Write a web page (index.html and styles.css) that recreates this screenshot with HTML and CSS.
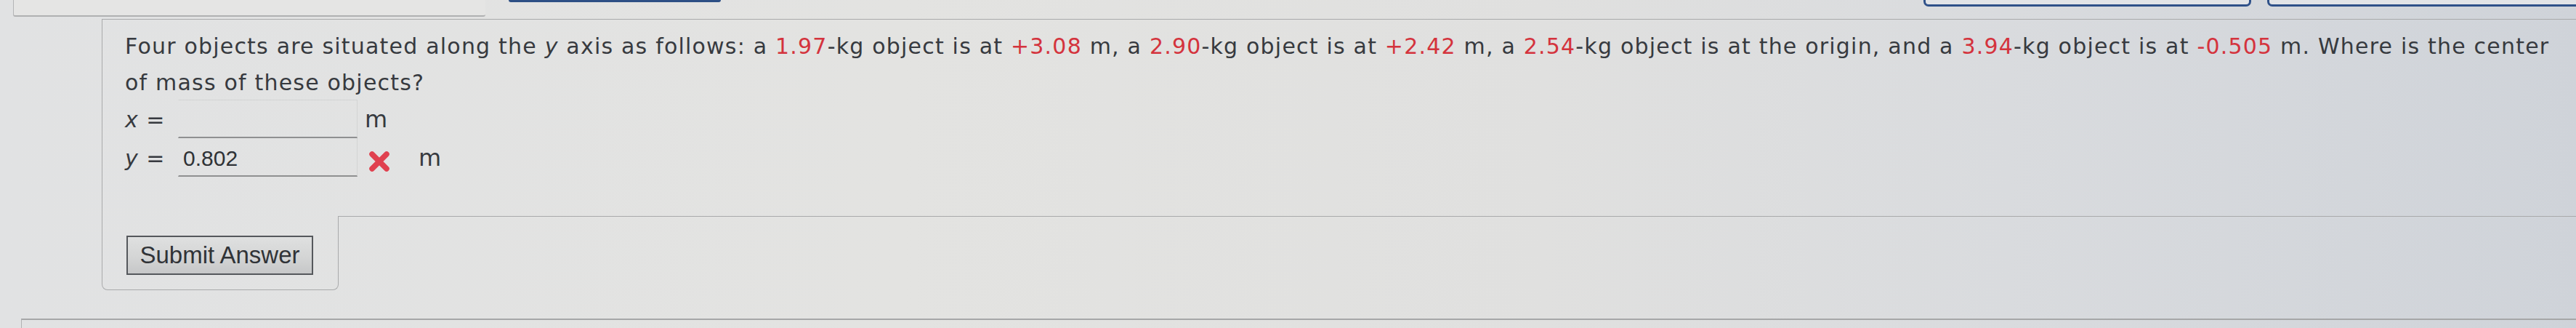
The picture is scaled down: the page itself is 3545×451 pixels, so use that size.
FILE: index.html
```html
<!DOCTYPE html>
<html lang="en">
<head>
<meta charset="utf-8">
<title>Center of mass question</title>
<link rel="stylesheet" href="styles.css">
</head>
<body>
<div class="toolbar">
  <div class="tab tab-grey"></div>
  <div class="tab tab-blue"></div>
  <div class="toolbar-spacer"></div>
  <div class="tab tab-outline tab-outline-1"></div>
  <div class="tab tab-outline tab-outline-2"></div>
</div>

<div class="question">
  <div class="question-body">
    <p class="prompt">Four objects are situated along the <i>y</i> axis as follows: a <span class="num">1.97</span>-kg object is at <span class="num">+3.08</span> m, a <span class="num">2.90</span>-kg object is at <span class="num">+2.42</span> m, a <span class="num">2.54</span>-kg object is at the origin, and a <span class="num">3.94</span>-kg object is at <span class="num">-0.505</span> m. Where is the center of mass of these objects?</p>
    <div class="answers">
      <div class="answer-row">
        <span class="var-label"><i>x</i> =</span>
        <input class="answer-input" type="text" value="">
        <span class="unit unit-first">m</span>
      </div>
      <div class="answer-row">
        <span class="var-label"><i>y</i> =</span>
        <input class="answer-input" type="text" value="0.802">
        <svg class="wrong-icon" viewBox="0 0 34 32" aria-label="incorrect">
          <path d="M7 6 L27 26 M27 6 L7 26" stroke="#e0414f" stroke-width="7.5" stroke-linecap="round" fill="none"/>
        </svg>
        <span class="unit unit-after-icon">m</span>
      </div>
    </div>
  </div>
  <div class="question-footer">
    <div class="submit-box">
      <button class="submit-btn" type="button">Submit Answer</button>
    </div>
    <div class="footer-filler"></div>
  </div>
</div>

<div class="next-block"></div>
</body>
</html>
```

FILE: styles.css
```css
html, body {
  margin: 0;
  padding: 0;
}

body {
  width: 3545px;
  height: 451px;
  overflow: hidden;
  background: linear-gradient(90deg, #e1e2e3 0%, #e3e3e1 35%, #e0e0df 60%, #d9dbde 78%, #cfd3d9 100%);
  font-family: "DejaVu Sans", Verdana, sans-serif;
  color: #373a3f;
}

/* top toolbar strip (cut off by the top edge) */
.toolbar {
  display: flex;
  align-items: flex-start;
  height: 26px;
  padding-left: 18px;
}

.tab {
  flex: none;
  box-sizing: border-box;
}

.tab-grey {
  width: 650px;
  height: 23px;
  border-left: 1px solid #b4b5b6;
  border-bottom: 2px solid #b0b1b2;
  border-radius: 0 0 3px 3px;
  background: #e5e5e4;
}

.tab-blue {
  width: 292px;
  height: 3px;
  margin-left: 32px;
  background: #2d4f85;
  border-radius: 0 0 3px 3px;
}

.toolbar-spacer {
  flex: 1;
}

.tab-outline {
  height: 9px;
  border: 3px solid #2f5189;
  border-top: none;
  border-radius: 0 0 7px 7px;
  background: #e2e4e7;
}

.tab-outline-1 {
  width: 451px;
}

.tab-outline-2 {
  width: 445px;
  margin-left: 22px;
  margin-right: -20px;
}

/* question panel */
.question {
  margin-left: 140px;
}

.question-body {
  border-top: 1px solid #a9aaab;
  border-left: 1px solid #a9aaab;
  padding: 12px 0 54px 31px;
}

.prompt {
  margin: 0;
  width: 3370px;
  font-size: 30px;
  letter-spacing: 1.2px;
  line-height: 50px;
}

.num {
  color: #d4333d;
}

.answers {
  margin-top: -2px;
}

.answer-row {
  display: flex;
  align-items: baseline;
  height: 53px;
  font-size: 30px;
  letter-spacing: 1px;
}

.var-label {
  width: 73px;
  flex: none;
}

.answer-input {
  flex: none;
  box-sizing: border-box;
  width: 247px;
  height: 53px;
  margin: 0;
  padding: 4px 6px 0;
  background: transparent;
  border: 1px solid #d3d4d4;
  border-bottom: 2px solid #8f9091;
  border-left-color: transparent;
  font-family: "Liberation Sans", Arial, sans-serif;
  font-size: 30px;
  letter-spacing: 0;
  color: #2f3236;
  outline: none;
}

.answer-row + .answer-row .answer-input {
  border-top: none;
}

.unit {
  font-size: 32px;
}

.unit-first {
  margin-left: 10px;
}

.wrong-icon {
  flex: none;
  align-self: center;
  width: 34px;
  height: 32px;
  margin: 10px 0 0 13px;
}

.unit-after-icon {
  margin-left: 37px;
}

/* footer with the submit button */
.question-footer {
  display: flex;
}

.submit-box {
  flex: none;
  width: 326px;
  height: 102px;
  box-sizing: border-box;
  border: 1px solid #a9aaab;
  border-top: none;
  border-radius: 0 0 8px 8px;
  padding: 27px 0 0 33px;
}

.submit-btn {
  display: block;
  box-sizing: border-box;
  width: 257px;
  height: 54px;
  margin: 0;
  padding: 0;
  border: 2px solid #55585c;
  background: linear-gradient(180deg, #dfe0e0 0%, #d4d5d5 55%, #c6c7c8 100%);
  font-family: "Liberation Sans", Arial, sans-serif;
  font-size: 33px;
  color: #303337;
}

.footer-filler {
  flex: 1;
  border-top: 1px solid #a9aaab;
}

.next-block {
  margin: 39px 0 0 29px;
  height: 20px;
  border-top: 2px solid #a6a7a8;
  border-left: 1px solid #b0b1b2;
}
```
